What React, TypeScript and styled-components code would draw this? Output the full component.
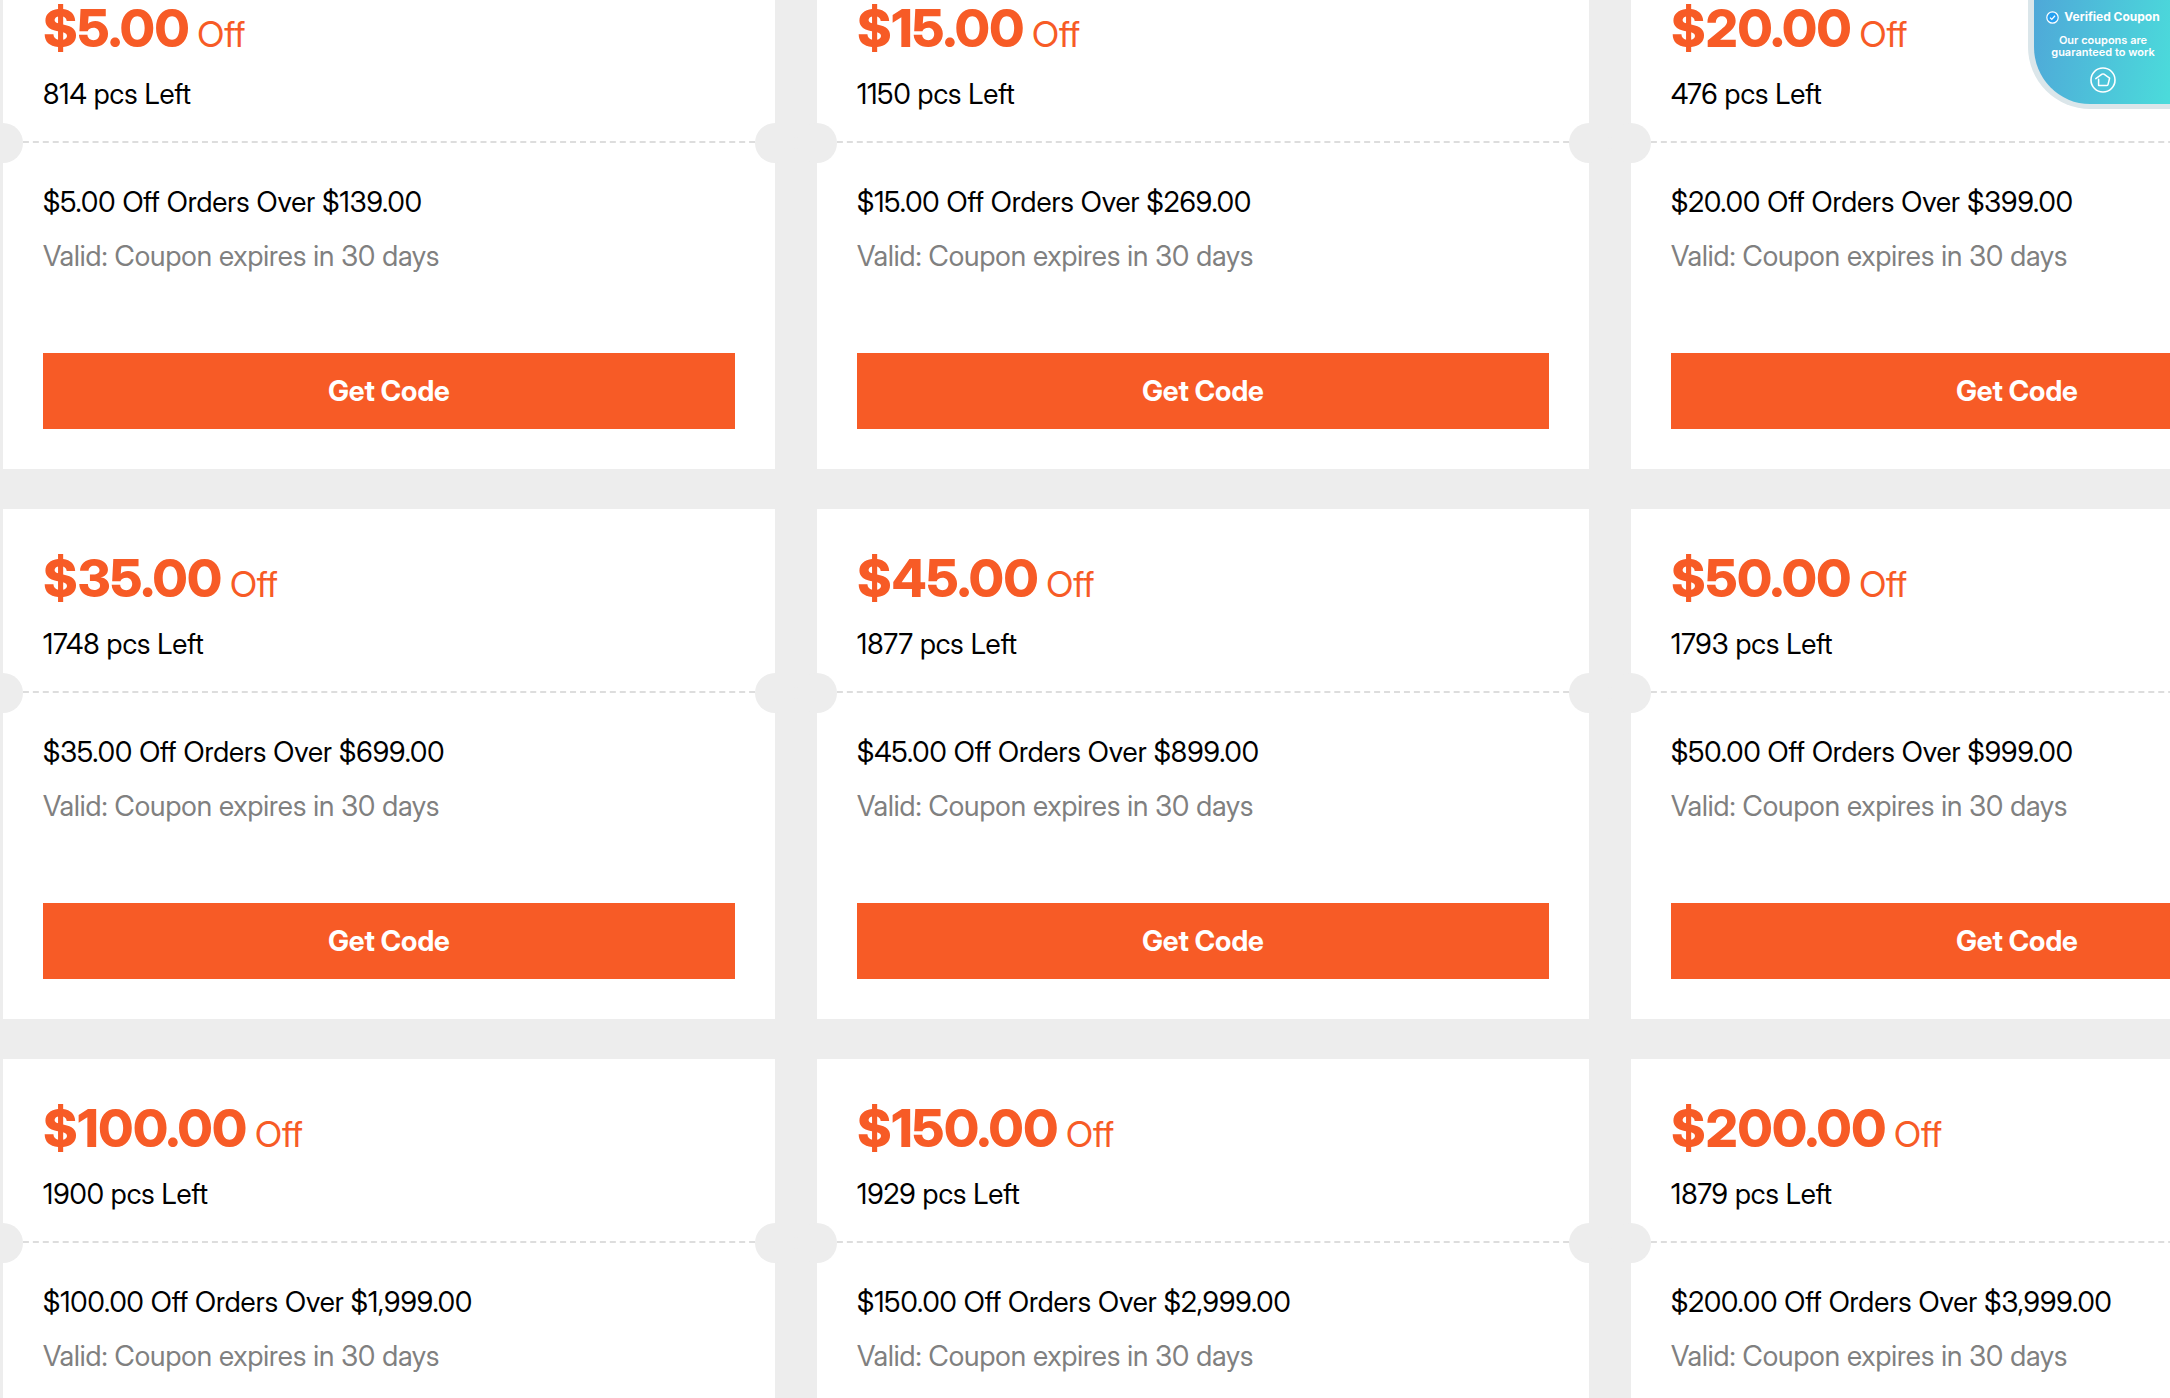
import React from "react";
import styled, { createGlobalStyle } from "styled-components";

const GlobalStyle = createGlobalStyle`
  *, *::before, *::after { box-sizing: border-box; }
  body {
    margin: 0;
    background: #ededed;
    font-family: "Inter Display", Inter, "Liberation Sans", sans-serif;
    font-variation-settings: "opsz" 32;
    color: #000;
  }
`;

const Viewport = styled.main`
  position: relative;
  height: 100vh;
  overflow: hidden;
`;

const CouponGrid = styled.ul`
  display: grid;
  grid-template-columns: repeat(3, 1fr);
  gap: 40px 42px;
  width: calc(100% + 236px);
  margin: -41px 0 0;
  padding: 0 3px;
  list-style: none;
`;

const Card = styled.li`
  display: flex;
  flex-direction: column;
  background: #fff;
`;

const CardTop = styled.header`
  position: relative;
  display: flex;
  flex-direction: column;
  gap: 23px;
  padding: 45px 40px 30px;
  border-bottom: 2px dashed #ddd;

  &::before,
  &::after {
    content: "";
    position: absolute;
    bottom: -22px;
    width: 40px;
    height: 40px;
    border-radius: 50%;
    background: #ededed;
  }
  &::before { left: -20px; }
  &::after { right: -20px; }
`;

const Price = styled.h2`
  display: flex;
  align-items: baseline;
  gap: 8px;
  margin: 0;
  font-size: 52px;
  font-weight: 800;
  line-height: 50px;
  color: #f75b26;
`;

const Off = styled.span`
  font-size: 36px;
  font-weight: 400;
  line-height: 36px;
`;

const Line = styled.p<{ $muted?: boolean }>`
  margin: 0;
  font-size: 28px;
  line-height: 34px;
  color: ${(p) => (p.$muted ? "#808080" : "#000")};
`;

const CardBody = styled.div`
  display: flex;
  flex-direction: column;
  gap: 20px;
  padding: 42px 40px 40px;
`;

const CodeButton = styled.button`
  height: 76px;
  margin-top: 60px;
  border: 0;
  background: #f75b26;
  color: #fff;
  font-family: inherit;
  font-size: 28px;
  font-weight: 700;
  cursor: pointer;
`;

const Badge = styled.aside`
  position: absolute;
  top: 0;
  right: 0;
  display: flex;
  flex-direction: column;
  align-items: center;
  width: 142px;
  height: 109px;
  padding: 10px 0 0 2px;
  border: solid #dbe6ea;
  border-width: 0 0 5px 6px;
  border-bottom-left-radius: 62px;
  background: linear-gradient(100deg, #4fa6d8, #4bdcdb) border-box;
  color: #fff;
  font-family: Inter, "Liberation Sans", sans-serif;
  font-variation-settings: normal;
`;

const BadgeTitle = styled.strong`
  display: flex;
  align-items: center;
  gap: 5px;
  font-size: 12px;
  line-height: 14px;
  white-space: nowrap;
`;

const BadgeText = styled.span`
  margin: 10px 0 9px;
  font-size: 11px;
  font-weight: 600;
  line-height: 12px;
  text-align: center;
  white-space: nowrap;
`;

const coupons = [
  { off: "$5.00", left: 814, over: "$139.00" },
  { off: "$15.00", left: 1150, over: "$269.00" },
  { off: "$20.00", left: 476, over: "$399.00" },
  { off: "$35.00", left: 1748, over: "$699.00" },
  { off: "$45.00", left: 1877, over: "$899.00" },
  { off: "$50.00", left: 1793, over: "$999.00" },
  { off: "$100.00", left: 1900, over: "$1,999.00" },
  { off: "$150.00", left: 1929, over: "$2,999.00" },
  { off: "$200.00", left: 1879, over: "$3,999.00" },
];

export default function App() {
  return (
    <Viewport>
      <GlobalStyle />
      <CouponGrid>
        {coupons.map((c) => (
          <Card key={c.off}>
            <CardTop>
              <Price>
                {c.off} <Off>Off</Off>
              </Price>
              <Line>{c.left} pcs Left</Line>
            </CardTop>
            <CardBody>
              <Line>
                {c.off} Off Orders Over {c.over}
              </Line>
              <Line $muted>Valid: Coupon expires in 30 days</Line>
              <CodeButton type="button">Get Code</CodeButton>
            </CardBody>
          </Card>
        ))}
      </CouponGrid>
      <Badge>
        <BadgeTitle>
          <svg width="13" height="13" viewBox="0 0 13 13" fill="none" stroke="#fff" aria-hidden="true">
            <circle cx="6.5" cy="6.5" r="5.7" fill="#25a0f0" strokeWidth="1.2" />
            <path d="M4 6.6l1.8 1.8 3.2-3.6" strokeWidth="1.3" />
          </svg>
          Verified Coupon
        </BadgeTitle>
        <BadgeText>
          Our coupons are
          <br />
          guaranteed to work
        </BadgeText>
        <svg width="26" height="26" viewBox="0 0 26 26" fill="none" stroke="#fff" aria-hidden="true">
          <circle cx="13" cy="13" r="12" strokeWidth="1.6" />
          <path
            d="M5.8 11.6L12 7.2Q13 6.6 14 7.2L19.6 11.2L18 17.6Q17.7 18.6 16.6 18.6H8.6V12.2"
            strokeWidth="1.5"
            strokeLinecap="round"
            strokeLinejoin="round"
          />
        </svg>
      </Badge>
    </Viewport>
  );
}
